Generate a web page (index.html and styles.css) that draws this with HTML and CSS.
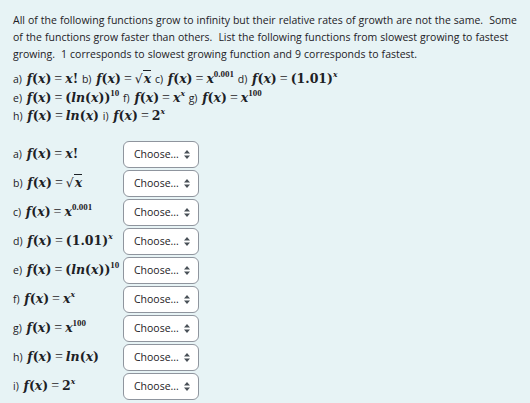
FILE: index.html
```html
<!DOCTYPE html>
<html>
<head>
<meta charset="utf-8">
<link rel="stylesheet" href="styles.css">
</head>
<body>
<div class="que">
  <div class="qtext">
    <p class="intro">All of the following functions grow to infinity but their relative rates of growth are not the same.&nbsp; Some of the functions grow faster than others.&nbsp; List the following functions from slowest growing to fastest growing.&nbsp; 1 corresponds to slowest growing function and 9 corresponds to fastest.</p>
    <p class="mline">a) <span class="m"><i>f</i>(<i>x</i>)<span class="eq">=</span><i>x</i>!</span> b) <span class="m"><i>f</i>(<i>x</i>)<span class="eq">=</span><span class="sqrt">√<span class="rad"><i>x</i></span></span></span> c) <span class="m"><i>f</i>(<i>x</i>)<span class="eq">=</span><i>x</i><sup>0.001</sup></span> d) <span class="m"><i>f</i>(<i>x</i>)<span class="eq">=</span>(1.01)<sup><i>x</i></sup></span></p>
    <p class="mline">e) <span class="m"><i>f</i>(<i>x</i>)<span class="eq">=</span>(<i>ln</i>(<i>x</i>))<sup>10</sup></span> f) <span class="m"><i>f</i>(<i>x</i>)<span class="eq">=</span><i>x</i><sup><i>x</i></sup></span> g) <span class="m"><i>f</i>(<i>x</i>)<span class="eq">=</span><i>x</i><sup>100</sup></span></p>
    <p class="mline">h) <span class="m"><i>f</i>(<i>x</i>)<span class="eq">=</span><i>ln</i>(<i>x</i>)</span> i) <span class="m"><i>f</i>(<i>x</i>)<span class="eq">=</span>2<sup><i>x</i></sup></span></p>
  </div>
  <div class="answer">
    <div class="row"><div class="label">a) <span class="m"><i>f</i>(<i>x</i>)<span class="eq">=</span><i>x</i>!</span></div><div class="select"><span>Choose...</span><svg width="6" height="9" viewBox="0 0 6 9"><path d="M3 0L6 3.5H0Z M3 9L6 5.5H0Z" fill="#495057"/></svg></div></div>
    <div class="row"><div class="label">b) <span class="m"><i>f</i>(<i>x</i>)<span class="eq">=</span><span class="sqrt">√<span class="rad"><i>x</i></span></span></span></div><div class="select"><span>Choose...</span><svg width="6" height="9" viewBox="0 0 6 9"><path d="M3 0L6 3.5H0Z M3 9L6 5.5H0Z" fill="#495057"/></svg></div></div>
    <div class="row"><div class="label">c) <span class="m"><i>f</i>(<i>x</i>)<span class="eq">=</span><i>x</i><sup>0.001</sup></span></div><div class="select"><span>Choose...</span><svg width="6" height="9" viewBox="0 0 6 9"><path d="M3 0L6 3.5H0Z M3 9L6 5.5H0Z" fill="#495057"/></svg></div></div>
    <div class="row"><div class="label">d) <span class="m"><i>f</i>(<i>x</i>)<span class="eq">=</span>(1.01)<sup><i>x</i></sup></span></div><div class="select"><span>Choose...</span><svg width="6" height="9" viewBox="0 0 6 9"><path d="M3 0L6 3.5H0Z M3 9L6 5.5H0Z" fill="#495057"/></svg></div></div>
    <div class="row"><div class="label">e) <span class="m"><i>f</i>(<i>x</i>)<span class="eq">=</span>(<i>ln</i>(<i>x</i>))<sup>10</sup></span></div><div class="select"><span>Choose...</span><svg width="6" height="9" viewBox="0 0 6 9"><path d="M3 0L6 3.5H0Z M3 9L6 5.5H0Z" fill="#495057"/></svg></div></div>
    <div class="row"><div class="label">f) <span class="m"><i>f</i>(<i>x</i>)<span class="eq">=</span><i>x</i><sup><i>x</i></sup></span></div><div class="select"><span>Choose...</span><svg width="6" height="9" viewBox="0 0 6 9"><path d="M3 0L6 3.5H0Z M3 9L6 5.5H0Z" fill="#495057"/></svg></div></div>
    <div class="row"><div class="label">g) <span class="m"><i>f</i>(<i>x</i>)<span class="eq">=</span><i>x</i><sup>100</sup></span></div><div class="select"><span>Choose...</span><svg width="6" height="9" viewBox="0 0 6 9"><path d="M3 0L6 3.5H0Z M3 9L6 5.5H0Z" fill="#495057"/></svg></div></div>
    <div class="row"><div class="label">h) <span class="m"><i>f</i>(<i>x</i>)<span class="eq">=</span><i>ln</i>(<i>x</i>)</span></div><div class="select"><span>Choose...</span><svg width="6" height="9" viewBox="0 0 6 9"><path d="M3 0L6 3.5H0Z M3 9L6 5.5H0Z" fill="#495057"/></svg></div></div>
    <div class="row"><div class="label">i) <span class="m"><i>f</i>(<i>x</i>)<span class="eq">=</span>2<sup><i>x</i></sup></span></div><div class="select"><span>Choose...</span><svg width="6" height="9" viewBox="0 0 6 9"><path d="M3 0L6 3.5H0Z M3 9L6 5.5H0Z" fill="#495057"/></svg></div></div>
  </div>
</div>
</body>
</html>
```

FILE: styles.css
```css
html, body {
  margin: 0;
  padding: 0;
  background: #e7f3f5;
}
body {
  font-family: "Open Sans", "Noto Sans", sans-serif;
  font-size: 10.5px;
  color: #1d2125;
}
.que {
  background: #e7f3f5;
  padding: 12px 5px 10px 13px;
  min-height: 403px;
  box-sizing: border-box;
}
.qtext p {
  margin: 0;
  line-height: 17px;
}
.intro {
  margin-bottom: 7px !important;
  word-spacing: 0.3px;
}
.mline {
  line-height: 17.5px !important;
  white-space: nowrap;
}
.m {
  font-family: "DejaVu Serif", "Liberation Serif", serif;
  font-weight: bold;
  font-size: 12.5px;
  margin: 0 1px 0 2px;
}
.m i {
  font-style: italic;
}
.m .eq {
  font-family: "Liberation Serif", serif;
  font-size: 14px;
  margin: 0 3px;
  font-weight: normal;
}
.m sup {
  font-family: "Liberation Serif", serif;
  font-size: 9px;
  line-height: 0;
  vertical-align: 6px;
}
.m sup i {
  font-family: "DejaVu Serif", serif;
  font-size: 7.5px;
}
.sqrt {
  font-weight: normal;
}
.rad {
  border-top: 1px solid #1d2125;
  font-weight: bold;
  padding-left: 1px;
}
.answer {
  margin-top: 15px;
  display: flex;
  flex-direction: column;
  gap: 2px;
}
.row {
  display: flex;
  align-items: center;
  height: 27px;
}
.label {
  width: 110px;
  white-space: nowrap;
}
.select {
  width: 76px;
  height: 27px;
  box-sizing: border-box;
  border: 1px solid #8f959e;
  border-radius: 6px;
  background: #fff;
  display: flex;
  align-items: center;
  justify-content: space-between;
  padding: 0 8px 0 10px;
  font-size: 10.5px;
  color: #1d2125;
}
```
